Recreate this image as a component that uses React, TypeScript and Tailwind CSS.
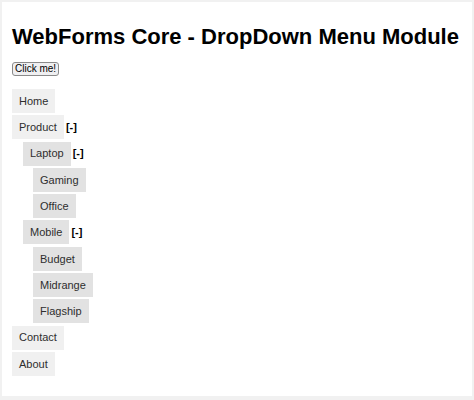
import React from "react";

type Item = { label: string; level: number; toggle?: boolean };

const items: Item[] = [
  { label: "Home", level: 0 },
  { label: "Product", level: 0, toggle: true },
  { label: "Laptop", level: 1, toggle: true },
  { label: "Gaming", level: 2 },
  { label: "Office", level: 2 },
  { label: "Mobile", level: 1, toggle: true },
  { label: "Budget", level: 2 },
  { label: "Midrange", level: 2 },
  { label: "Flagship", level: 2 },
  { label: "Contact", level: 0 },
  { label: "About", level: 0 },
];

const indent = ["pl-0", "pl-[11px]", "pl-[21px]"];

export default function App() {
  return (
    <div
      className="w-[474px] h-[400px] bg-white border-t-2 border-l-2 border-r-2 border-b-4 border-[#f1f1f1] pl-[10px] pt-[22px] overflow-hidden"
      style={{ fontFamily: '"Liberation Sans", Arial, sans-serif' }}
    >
      <h1 className="text-[22px] leading-[25px] font-bold text-black whitespace-nowrap">
        WebForms Core - DropDown Menu Module
      </h1>
      <div className="mt-[13px] flex">
        <button className="h-[14px] px-[2px] text-[10px] leading-[12px] text-black bg-[#efeff1] border border-[#8a8a8a] rounded-[3px]">
          Click me!
        </button>
      </div>
      <div className="mt-[13px] flex flex-col gap-[2.3px]">
        {items.map((it) => (
          <div key={it.label} className={`flex items-center ${indent[it.level]}`}>
            <div
              className={`h-[24px] px-[7px] flex items-center text-[11px] text-[#2e2e2e] ${
                it.level === 0 ? "bg-[#f0f0f0]" : "bg-[#e2e2e2]"
              }`}
            >
              {it.label}
            </div>
            {it.toggle && (
              <span className="ml-[2px] text-[11px] font-bold text-black">[-]</span>
            )}
          </div>
        ))}
      </div>
    </div>
  );
}
